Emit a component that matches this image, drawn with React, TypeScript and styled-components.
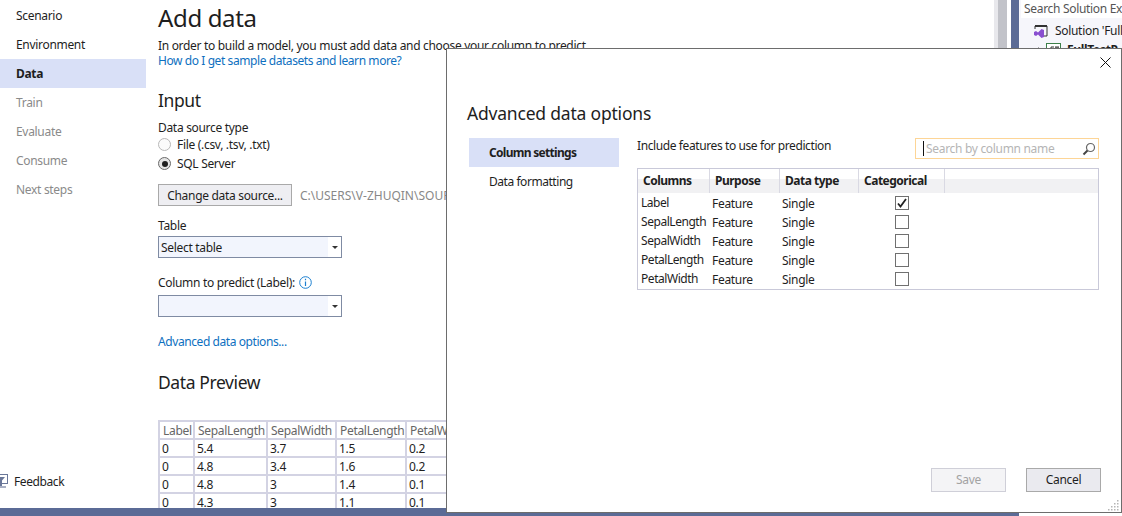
import React from 'react';
import styled, { createGlobalStyle } from 'styled-components';

const GlobalStyle = createGlobalStyle`
  html, body {
    margin: 0;
    padding: 0;
    background: #fff;
  }
  body {
    font-family: "Noto Sans", "Open Sans", "Liberation Sans", sans-serif;
    font-size: 12px;
    letter-spacing: -0.31px;
    color: #1e1e1e;
  }
`;

const Screen = styled.div`
  position: relative;
  width: 1122px;
  height: 516px;
  overflow: hidden;
  display: flex;
  flex-direction: column;
`;

const Workspace = styled.div`
  flex: 1;
  min-height: 0;
  display: flex;
`;

const StatusStrip = styled.div`
  flex: 0 0 8px;
  display: flex;
`;

const StatusBar = styled.div`
  width: 1019px;
  background: #5b6b96;
`;

const Nav = styled.nav`
  width: 146px;
  flex: none;
  display: flex;
  flex-direction: column;
  padding-top: 1px;
`;

const NavItem = styled.div<{ $active?: boolean; $disabled?: boolean }>`
  height: 29px;
  line-height: 30px;
  padding-left: 16px;
  background: ${({ $active }) => ($active ? '#d9e0f7' : 'transparent')};
  font-weight: ${({ $active }) => ($active ? 700 : 400)};
  color: ${({ $disabled }) => ($disabled ? '#8a8a8a' : '#1e1e1e')};
`;

const Feedback = styled.div`
  margin-top: auto;
  margin-bottom: 19px;
  margin-left: -6px;
  display: flex;
  align-items: center;
  gap: 6px;
  height: 16px;
  letter-spacing: -0.4px;
`;

const Main = styled.main`
  flex: 1;
  min-width: 0;
  overflow: hidden;
  padding-left: 12px;
`;

const PageTitle = styled.h1`
  margin: 2px 0 0;
  font-size: 24px;
  line-height: 32px;
  font-weight: 400;
  letter-spacing: -0.35px;
`;

const Text = styled.div`
  line-height: 15px;
  white-space: nowrap;
`;

const Intro = styled(Text)`
  margin-top: 4px;
`;

const LinkText = styled(Text)<{ $top?: number }>`
  margin-top: ${({ $top = 0 }) => $top}px;
  color: #0e70c0;
  letter-spacing: -0.42px;
`;

const SectionTitle = styled.h2<{ $top: number }>`
  margin: ${({ $top }) => $top}px 0 0;
  font-size: 17.5px;
  line-height: 24px;
  font-weight: 400;
  letter-spacing: -0.4px;
`;

const FieldLabel = styled(Text)<{ $top: number }>`
  margin-top: ${({ $top }) => $top}px;
  display: flex;
  align-items: center;
  gap: 4px;
`;

const RadioRow = styled.div`
  height: 19px;
  display: flex;
  align-items: center;
  gap: 6px;
`;

const RadioMark = styled.span<{ $on?: boolean }>`
  width: 13px;
  height: 13px;
  box-sizing: border-box;
  border-radius: 50%;
  border: 1px solid ${({ $on }) => ($on ? '#6a6a6a' : '#b8b8b8')};
  background: ${({ $on }) => ($on ? '#e4e4e4' : '#fbfbfb')};
  display: flex;
  align-items: center;
  justify-content: center;
  &::after {
    content: '';
    display: ${({ $on }) => ($on ? 'block' : 'none')};
    width: 6px;
    height: 6px;
    border-radius: 50%;
    background: #1e1e1e;
  }
`;

const SourceRow = styled.div`
  margin-top: 11px;
  display: flex;
  align-items: center;
  gap: 8px;
  white-space: nowrap;
`;

const GreyButton = styled.div`
  box-sizing: border-box;
  width: 134px;
  height: 22px;
  line-height: 22px;
  text-align: center;
  background: #eeeef2;
  border: 1px solid #a9a9a9;
`;

const PathText = styled.span`
  color: #888;
  letter-spacing: 0;
`;

const SelectBox = styled.div<{ $top: number }>`
  box-sizing: border-box;
  margin-top: ${({ $top }) => $top}px;
  width: 184px;
  height: 22px;
  border: 1px solid #7f8ba3;
  display: flex;
  background: #fff;
`;

const SelectValue = styled.div`
  flex: 1;
  line-height: 21px;
  padding-left: 2px;
  background: #f2f5fd;
`;

const SelectArrow = styled.div`
  width: 13px;
  display: flex;
  align-items: center;
  justify-content: center;
  &::after {
    content: '';
    border-left: 3px solid transparent;
    border-right: 3px solid transparent;
    border-top: 3px solid #333;
  }
`;

const PreviewTable = styled.table`
  margin-top: 26px;
  border-collapse: collapse;
  table-layout: fixed;
  width: 317px;
  border: 2px solid #d3d3e3;
  border-right: none;

  th, td {
    box-sizing: border-box;
    border: 2px solid #d3d3e3;
    padding: 0 0 0 2px;
    height: 18px;
    line-height: 15px;
    font-weight: 400;
    text-align: left;
    white-space: nowrap;
    overflow: hidden;
  }
  th {
    color: #666;
    padding-left: 3px;
  }
`;

const ScrollTrack = styled.div`
  width: 13px;
  flex: none;
  margin-right: 4px;
  background: #e8e8ec;
  display: flex;
  justify-content: flex-end;
`;

const ScrollThumb = styled.div`
  width: 9px;
  height: 48px;
  background: #c2c3c9;
`;

const Accent = styled.div`
  width: 8px;
  flex: none;
  background: #5b6b96;
`;

const Explorer = styled.aside`
  width: 103px;
  flex: none;
  background: #f6f6fb;
  overflow: hidden;
  white-space: nowrap;
`;

const ExplorerSearch = styled.div`
  height: 18px;
  margin-left: 2px;
  padding-left: 3px;
  line-height: 17px;
  background: #fff;
  color: #555;
`;

const TreeRow = styled.div<{ $bold?: boolean; $indent: number; $top: number }>`
  height: 16px;
  margin-top: ${({ $top }) => $top}px;
  display: flex;
  align-items: center;
  gap: 6px;
  padding-left: ${({ $indent }) => $indent}px;
  line-height: 16px;
  font-weight: ${({ $bold }) => ($bold ? 700 : 400)};
  svg {
    flex: none;
  }
`;

const Dialog = styled.section`
  position: absolute;
  left: 446px;
  top: 48px;
  width: 676px;
  height: 465px;
  box-sizing: border-box;
  background: #fff;
  border: 1px solid #6d6d6d;
  display: flex;
  flex-direction: column;
  padding: 0 0 0 20px;
`;

const CloseIcon = styled.svg`
  position: absolute;
  right: 10px;
  top: 8px;
  width: 11px;
  height: 11px;
`;

const DialogTitle = styled.h2`
  margin: 52px 0 0;
  font-size: 17.5px;
  line-height: 24px;
  font-weight: 400;
  letter-spacing: -0.2px;
`;

const DialogBody = styled.div`
  margin-top: 13px;
  flex: 1;
  display: flex;
`;

const SideMenu = styled.div`
  margin-left: 2px;
  width: 150px;
  flex: none;
`;

const SideItem = styled.div<{ $active?: boolean }>`
  height: 29px;
  line-height: 30px;
  padding-left: 20px;
  background: ${({ $active }) => ($active ? '#d9e0f7' : 'transparent')};
  font-weight: ${({ $active }) => ($active ? 700 : 400)};
  letter-spacing: ${({ $active }) => ($active ? '-0.7px' : '-0.45px')};
`;

const Settings = styled.div`
  margin-left: 18px;
  width: 462px;
`;

const SettingsHead = styled.div`
  height: 21px;
  display: flex;
  justify-content: space-between;
  line-height: 15px;
  letter-spacing: -0.4px;
`;

const SearchBox = styled.div`
  box-sizing: border-box;
  width: 184px;
  height: 21px;
  border: 1px solid #fdd596;
  display: flex;
  align-items: center;
  padding: 0 2px 0 7px;
  color: #b5b5b5;
  letter-spacing: -0.31px;
`;

const Caret = styled.span`
  width: 1px;
  height: 15px;
  background: #111;
  margin-right: 2px;
`;

const SearchHint = styled.span`
  flex: 1;
`;

const GridWrap = styled.div`
  margin-top: 9px;
  box-sizing: border-box;
  height: 122px;
  border: 1px solid #c9c9d9;
`;

const GridHeader = styled.div`
  height: 24px;
  display: flex;
  background: linear-gradient(#fff 0 40%, #f1f1f3 40% 100%);
`;

const HeaderCell = styled.div<{ $w: number }>`
  box-sizing: border-box;
  width: ${({ $w }) => $w}px;
  padding-left: 5px;
  line-height: 24px;
  font-weight: 700;
  letter-spacing: -0.5px;
  border-right: 1px solid #d9d9e3;
`;

const GridRow = styled.div`
  box-sizing: border-box;
  height: 19px;
  padding-top: 1px;
  display: flex;
  align-items: center;
  line-height: 15px;
`;

const NameCell = styled.div`
  width: 71px;
  flex: none;
  padding-left: 3px;
  box-sizing: border-box;
  margin-top: -2px;
  letter-spacing: -0.45px;
`;

const ValueCell = styled.div`
  width: 70px;
  flex: none;
  padding-left: 3px;
  box-sizing: border-box;
`;

const TypeCell = styled(ValueCell)`
  width: 80px;
`;

const CheckBox = styled.span`
  box-sizing: border-box;
  width: 14px;
  height: 14px;
  border: 1px solid #707070;
  display: flex;
  align-items: center;
  justify-content: center;
  margin-left: 36px;
`;

const DialogFooter = styled.div`
  position: absolute;
  right: 20px;
  bottom: 20px;
  display: flex;
  gap: 20px;
`;

const FooterButton = styled.div<{ $disabled?: boolean }>`
  box-sizing: border-box;
  width: 75px;
  height: 24px;
  line-height: 22px;
  text-align: center;
  border: 1px solid ${({ $disabled }) => ($disabled ? '#cfcfd8' : '#a9a9a9')};
  background: ${({ $disabled }) => ($disabled ? '#f4f4f6' : '#eaeaef')};
  color: ${({ $disabled }) => ($disabled ? '#a3a3a3' : '#1e1e1e')};
`;

const Grip = styled.svg`
  position: absolute;
  right: 1px;
  bottom: 1px;
  width: 12px;
  height: 12px;
`;

const steps = ['Scenario', 'Environment', 'Data', 'Train', 'Evaluate', 'Consume', 'Next steps'];

const preview = [
  ['0', '5.4', '3.7', '1.5', '0.2'],
  ['0', '4.8', '3.4', '1.6', '0.2'],
  ['0', '4.8', '3', '1.4', '0.1'],
  ['0', '4.3', '3', '1.1', '0.1'],
];

const columns = ['Label', 'SepalLength', 'SepalWidth', 'PetalLength', 'PetalWidth'];

const gripDots = [[9, 1], [6, 4], [9, 4], [3, 7], [6, 7], [9, 7], [0, 10], [3, 10], [6, 10], [9, 10]];

const App: React.FC = () => (
  <Screen>
    <GlobalStyle />
    <Workspace>
      <Nav>
        {steps.map((step, i) => (
          <NavItem key={step} $active={i === 2} $disabled={i > 2}>
            {step}
          </NavItem>
        ))}
        <Feedback>
          <svg width="14" height="14" viewBox="0 0 14 14">
            <rect x="0.5" y="0.5" width="13" height="9" fill="#fff" stroke="#6a7799" />
            <path d="M3 3h8L8 6.5V12H6V6.5z" fill="#6a7799" />
            <path d="M2 12h10v2H2z" fill="#a9b0c4" />
          </svg>
          Feedback
        </Feedback>
      </Nav>
      <Main>
        <PageTitle>Add data</PageTitle>
        <Intro>In order to build a model, you must add data and choose your column to predict.</Intro>
        <LinkText>How do I get sample datasets and learn more?</LinkText>
        <SectionTitle $top={20}>Input</SectionTitle>
        <FieldLabel $top={8}>Data source type</FieldLabel>
        <RadioRow>
          <RadioMark />
          File (.csv, .tsv, .txt)
        </RadioRow>
        <RadioRow>
          <RadioMark $on />
          SQL Server
        </RadioRow>
        <SourceRow>
          <GreyButton>Change data source...</GreyButton>
          <PathText>C:\USERS\V-ZHUQIN\SOURCE\REPOS</PathText>
        </SourceRow>
        <FieldLabel $top={12}>Table</FieldLabel>
        <SelectBox $top={3}>
          <SelectValue>Select table</SelectValue>
          <SelectArrow />
        </SelectBox>
        <FieldLabel $top={17}>
          Column to predict (Label):
          <svg width="13" height="13" viewBox="0 0 13 13">
            <circle cx="6.5" cy="6.5" r="5.8" fill="none" stroke="#1b7fd0" />
            <path d="M6.5 5.5v4.5M6.5 2.8v1.4" stroke="#1b7fd0" strokeWidth="1.2" />
          </svg>
        </FieldLabel>
        <SelectBox $top={5}>
          <SelectValue />
          <SelectArrow />
        </SelectBox>
        <LinkText $top={17}>Advanced data options...</LinkText>
        <SectionTitle $top={21}>Data Preview</SectionTitle>
        <PreviewTable>
          <colgroup>
            <col width="35" />
            <col width="73" />
            <col width="69" />
            <col width="70" />
            <col width="70" />
          </colgroup>
          <thead>
            <tr>
              {columns.map((c) => (
                <th key={c}>{c}</th>
              ))}
            </tr>
          </thead>
          <tbody>
            {preview.map((row, i) => (
              <tr key={i}>
                {row.map((v, j) => (
                  <td key={j}>{v}</td>
                ))}
              </tr>
            ))}
          </tbody>
        </PreviewTable>
      </Main>
      <ScrollTrack>
        <ScrollThumb />
      </ScrollTrack>
      <Accent />
      <Explorer>
        <ExplorerSearch>Search Solution Ex</ExplorerSearch>
        <TreeRow $indent={15} $top={5}>
          <svg width="15" height="14" viewBox="0 0 15 14">
            <path d="M1 5V2h12v10H9" fill="none" stroke="#333" />
            <path d="M1 1h12v2H1z" fill="#333" />
            <path d="M0 8l2-1 2 1.5L7.5 5 10 6v7l-2.5 1L4 10.5 2 12l-2-1z" fill="#8a4fd0" />
          </svg>
          Solution 'Full
        </TreeRow>
        <TreeRow $bold $indent={16} $top={3}>
          <svg width="5" height="6" viewBox="0 0 5 6">
            <path d="M4 0v5H0z" fill="#333" />
          </svg>
          <svg width="15" height="14" viewBox="0 0 15 14">
            <rect x="0.5" y="0.5" width="14" height="13" fill="#fff" stroke="#3d7f4a" />
            <path d="M8 4H5v5h3M10 3v7M12 3v7M9 5h4M9 8h4" fill="none" stroke="#333" />
          </svg>
          FullTestP
        </TreeRow>
      </Explorer>
    </Workspace>
    <StatusStrip>
      <StatusBar />
    </StatusStrip>

    <Dialog>
      <CloseIcon viewBox="0 0 11 11">
        <path d="M.5.5l10 10M10.5.5l-10 10" stroke="#111" fill="none" />
      </CloseIcon>
      <DialogTitle>Advanced data options</DialogTitle>
      <DialogBody>
        <SideMenu>
          <SideItem $active>Column settings</SideItem>
          <SideItem>Data formatting</SideItem>
        </SideMenu>
        <Settings>
          <SettingsHead>
            <span>Include features to use for prediction</span>
            <SearchBox>
              <Caret />
              <SearchHint>Search by column name</SearchHint>
              <svg width="14" height="14" viewBox="0 0 14 14">
                <circle cx="8.5" cy="5.5" r="4" fill="none" stroke="#666" strokeWidth="1.2" />
                <path d="M5.5 8.5L1.5 12.5" stroke="#444" strokeWidth="2" />
              </svg>
            </SearchBox>
          </SettingsHead>
          <GridWrap>
            <GridHeader>
              <HeaderCell $w={72}>Columns</HeaderCell>
              <HeaderCell $w={70}>Purpose</HeaderCell>
              <HeaderCell $w={79}>Data type</HeaderCell>
              <HeaderCell $w={86}>Categorical</HeaderCell>
            </GridHeader>
            {columns.map((name, i) => (
              <GridRow key={name}>
                <NameCell>{name}</NameCell>
                <ValueCell>Feature</ValueCell>
                <TypeCell>Single</TypeCell>
                <CheckBox>
                  {i === 0 && (
                    <svg width="10" height="10" viewBox="0 0 10 10">
                      <path d="M1 5.5l2.5 3L9 1" fill="none" stroke="#222" strokeWidth="1.8" />
                    </svg>
                  )}
                </CheckBox>
              </GridRow>
            ))}
          </GridWrap>
        </Settings>
      </DialogBody>
      <DialogFooter>
        <FooterButton $disabled>Save</FooterButton>
        <FooterButton>Cancel</FooterButton>
      </DialogFooter>
      <Grip viewBox="0 0 12 12">
        {gripDots.map(([x, y]) => (
          <rect key={`${x}-${y}`} x={x} y={y} width="1.5" height="1.5" fill="#b5b5b5" />
        ))}
      </Grip>
    </Dialog>
  </Screen>
);

export default App;
